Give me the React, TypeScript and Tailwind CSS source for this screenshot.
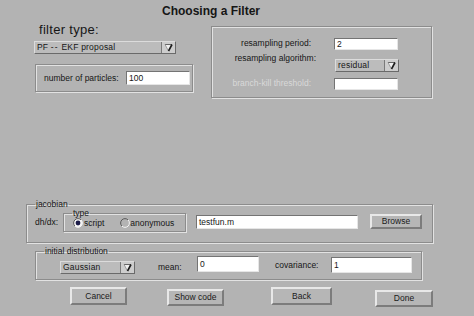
import type { ReactNode } from "react";

type BoxProps = {
  className: string;
  children?: ReactNode;
};

function ArrowGlyph() {
  return (
    <svg width="9" height="9" viewBox="0 0 9 9">
      <polygon points="1,1.5 8,1.5 4.5,8" fill="#f0f0f0" />
      <line x1="1" y1="1.5" x2="8" y2="1.5" stroke="#666" strokeWidth="1" />
      <line x1="1" y1="1.5" x2="4.5" y2="8" stroke="#9a9a9a" strokeWidth="1" />
      <line x1="8" y1="1.5" x2="4.5" y2="8" stroke="#1c1c1c" strokeWidth="1.6" />
    </svg>
  );
}

function Dropdown({ className, children }: BoxProps) {
  return (
    <div
      className={`flex border border-t-[#dcdcdc] border-l-[#dcdcdc] border-b-[#6a6a6a] border-r-[#6a6a6a] bg-[#bcbcbc] ${className}`}
    >
      <span className="flex flex-1 items-center whitespace-pre pl-[2px] text-[8.5px] leading-none tracking-[0.2px]">{children}</span>
      <span className="flex w-[14px] items-center justify-center border-l border-l-[#7a7a7a] bg-[#cdcdcd]">
        <ArrowGlyph />
      </span>
    </div>
  );
}

function Field({ className, children }: BoxProps) {
  return (
    <div
      className={`flex items-center border border-t-[#747474] border-l-[#747474] border-b-[#e6e6e6] border-r-[#e6e6e6] bg-white pl-[2px] text-[8.5px] leading-none ${className}`}
    >
      {children}
    </div>
  );
}

function Button({ className, children }: BoxProps) {
  return (
    <button
      type="button"
      className={`flex items-center justify-center border-2 border-t-[#e8e8e8] border-l-[#e8e8e8] border-b-[#7c7c7c] border-r-[#7c7c7c] bg-[#b6b6b6] text-[8.5px] leading-none text-[#1a1a1a] ${className}`}
    >
      {children}
    </button>
  );
}

function Radio({ checked }: { checked: boolean }) {
  return (
    <svg width="10" height="10" viewBox="0 0 10 10" className="shrink-0">
      <circle cx="5" cy="5" r="4.3" fill={checked ? "#f4f4f4" : "#b3b3b3"} />
      <path d="M1.9 8.1 A4.3 4.3 0 0 1 8.1 1.9" fill="none" stroke="#5a5a5a" strokeWidth="1" />
      <path d="M8.1 1.9 A4.3 4.3 0 0 1 1.9 8.1" fill="none" stroke="#f2f2f2" strokeWidth="1" />
      {checked ? <circle cx="5" cy="5" r="2.4" fill="#1b1b48" /> : null}
    </svg>
  );
}

export default function App() {
  return (
    <div className="flex h-[316px] w-[474px] flex-col overflow-hidden bg-[#b3b3b3] font-['Liberation_Sans',Arial,sans-serif] text-[#161616]">
      <h1 className="ml-[162px] mt-[4px] h-[15px] text-[12px] font-bold leading-[15px]">
        Choosing a Filter
      </h1>

      <div className="flex items-start">
        <div className="ml-[34px] flex w-[159px] flex-col">
          <p className="ml-[5px] mt-[3px] text-[13px] leading-[16px] tracking-[0.3px]">filter type:</p>
          <Dropdown className="mt-[3px] h-[13px] w-[142px]">
            PF <span className="tracking-[1.2px]">--</span> EKF proposal
          </Dropdown>
          <div className="ml-[1px] mt-[10px] flex h-[28px] w-[158px] items-center border border-[#8c8c8c] shadow-[inset_1px_1px_0_#e2e2e2,1px_1px_0_#e2e2e2]">
            <span className="ml-[8px] text-[8.5px] leading-none">number of particles:</span>
            <Field className="ml-auto mr-[2px] h-[14px] w-[64px]">100</Field>
          </div>
        </div>

        <div className="ml-[18px] mt-[7px] h-[72px] w-[221px] border border-[#8c8c8c] pt-[11px] shadow-[inset_1px_1px_0_#e2e2e2,1px_1px_0_#e2e2e2]">
          <div className="flex h-[12px]">
            <span className="w-[99px] text-right text-[8.5px] leading-[10px]">resampling period:</span>
            <Field className="ml-[23px] h-[12px] w-[64px]">2</Field>
          </div>
          <div className="mt-[4px] flex items-start">
            <span className="w-[104px] text-right text-[8.5px] leading-[9px]">resampling algorithm:</span>
            <Dropdown className="ml-[19px] mt-[5px] h-[13px] w-[64px]">residual</Dropdown>
          </div>
          <div className="mt-[6px] flex h-[12px]">
            <span className="w-[99px] text-right text-[8.5px] leading-[10px] text-[#d9d9d9]">
              branch-kill threshold:
            </span>
            <Field className="ml-[23px] h-[12px] w-[64px]">{""}</Field>
          </div>
        </div>
      </div>

      <fieldset className="ml-[26px] mt-[101px] w-[407px] border border-[#8c8c8c] shadow-[inset_1px_1px_0_#e2e2e2,1px_1px_0_#e2e2e2]">
        <legend className="ml-[8px] px-[1px] text-[8.5px] leading-[10px]">jacobian</legend>
        <div className="flex h-[33px] items-start">
          <span className="ml-[8px] mt-[8px] w-[28px] text-[8.5px] leading-[10px]">dh/dx:</span>
          <fieldset className="-mt-[1px] w-[123px] border border-[#8c8c8c] shadow-[inset_1px_1px_0_#e2e2e2,1px_1px_0_#e2e2e2]">
            <legend className="ml-[8px] px-[1px] text-[8.5px] leading-[10px]">type</legend>
            <div className="flex h-[13px] items-start">
              <span className="ml-[9px] flex items-center">
                <Radio checked />
                <span className="ml-[1px] text-[8.5px] leading-[10px]">script</span>
              </span>
              <span className="ml-[16px] flex items-center">
                <Radio checked={false} />
                <span className="text-[8.5px] leading-[10px]">anonymous</span>
              </span>
            </div>
          </fieldset>
          <Field className="ml-[10px] mt-[6px] h-[14px] w-[162px]">testfun.m</Field>
          <Button className="ml-[12px] mt-[5px] h-[15px] w-[52px]">Browse</Button>
        </div>
      </fieldset>

      <fieldset className="ml-[35px] mt-[3px] w-[387px] border border-[#8c8c8c] shadow-[inset_1px_1px_0_#e2e2e2,1px_1px_0_#e2e2e2]">
        <legend className="ml-[8px] px-[1px] text-[8.5px] leading-[10px]">initial distribution</legend>
        <div className="flex h-[23px] items-start">
          <Dropdown className="ml-[24px] mt-[5px] h-[13px] w-[75px]">Gaussian</Dropdown>
          <span className="ml-[23px] mt-[6px] w-[39px] text-[8.5px] leading-[10px]">mean:</span>
          <Field className="h-[16px] w-[62px]">0</Field>
          <span className="ml-[16px] mt-[4px] w-[56px] text-[8.5px] leading-[10px]">covariance:</span>
          <Field className="mt-[1px] h-[16px] w-[81px]">1</Field>
        </div>
      </fieldset>

      <div className="flex items-start">
        <Button className="ml-[70px] mt-[7px] h-[18px] w-[57px]">Cancel</Button>
        <Button className="ml-[40px] mt-[9px] h-[17px] w-[57px]">Show code</Button>
        <Button className="ml-[47px] mt-[7px] h-[18px] w-[61px]">Back</Button>
        <Button className="ml-[43px] mt-[10px] h-[17px] w-[58px]">Done</Button>
      </div>
    </div>
  );
}
